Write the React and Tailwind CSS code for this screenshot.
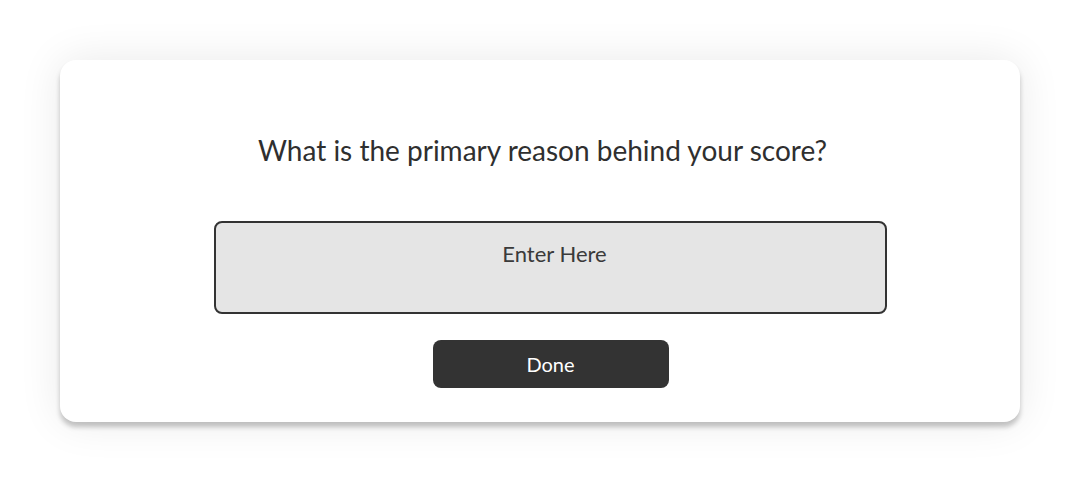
import React, { useState } from 'react';

const App = () => {
    const [reason, setReason] = useState('');

    return (
        <div className="w-[1080px] h-[482px] bg-white px-[60px] pt-[60px] font-['Lato','Open_Sans',sans-serif]">
            <div className="h-[362px] bg-white rounded-[16px] shadow-[0_5px_5px_rgba(0,0,0,0.22),0_0_44px_rgba(0,0,0,0.09)] flex flex-col items-center pt-[74px]">
                <h1 className="text-[28px] leading-[32px] text-[#2f2f2f] ml-[5px]">
                    What is the primary reason behind your score?
                </h1>
                <div className="mt-[55px] ml-[21px] flex flex-col items-center">
                    <textarea
                        value={reason}
                        onChange={(e) => setReason(e.target.value)}
                        placeholder="Enter Here"
                        className="w-[673px] h-[93px] bg-[#e5e5e5] border-2 border-[#333333] rounded-[8px] resize-none text-center text-[22px] leading-[26px] pt-[18px] pl-[8px] text-[#333333] placeholder:text-[#3a3a3a] outline-none"
                    />
                    <button className="mt-[26px] w-[236px] h-[48px] bg-[#333333] rounded-[8px] text-white text-[20px]">
                        Done
                    </button>
                </div>
            </div>
        </div>
    );
};

export default App;
